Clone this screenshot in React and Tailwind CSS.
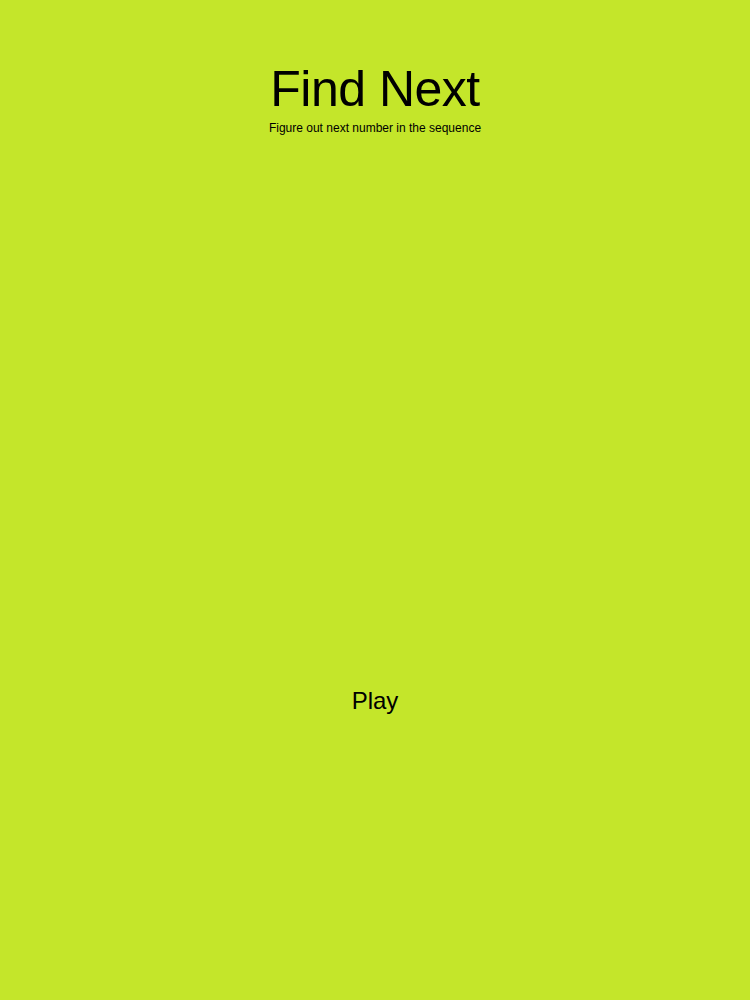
export default function App() {
  return (
    <div className="w-full h-[1000px] bg-[#c4e62a] text-black flex flex-col items-center" style={{ fontFamily: '"Liberation Sans", Arial, sans-serif' }}>
      <h1 className="mt-[64px] text-[50px] leading-none font-normal tracking-[-0.5px]">Find Next</h1>
      <p className="mt-[8px] text-[12px] leading-none">Figure out next number in the sequence</p>
      <button className="mt-[555px] text-[24px] leading-none">Play</button>
    </div>
  );
}
